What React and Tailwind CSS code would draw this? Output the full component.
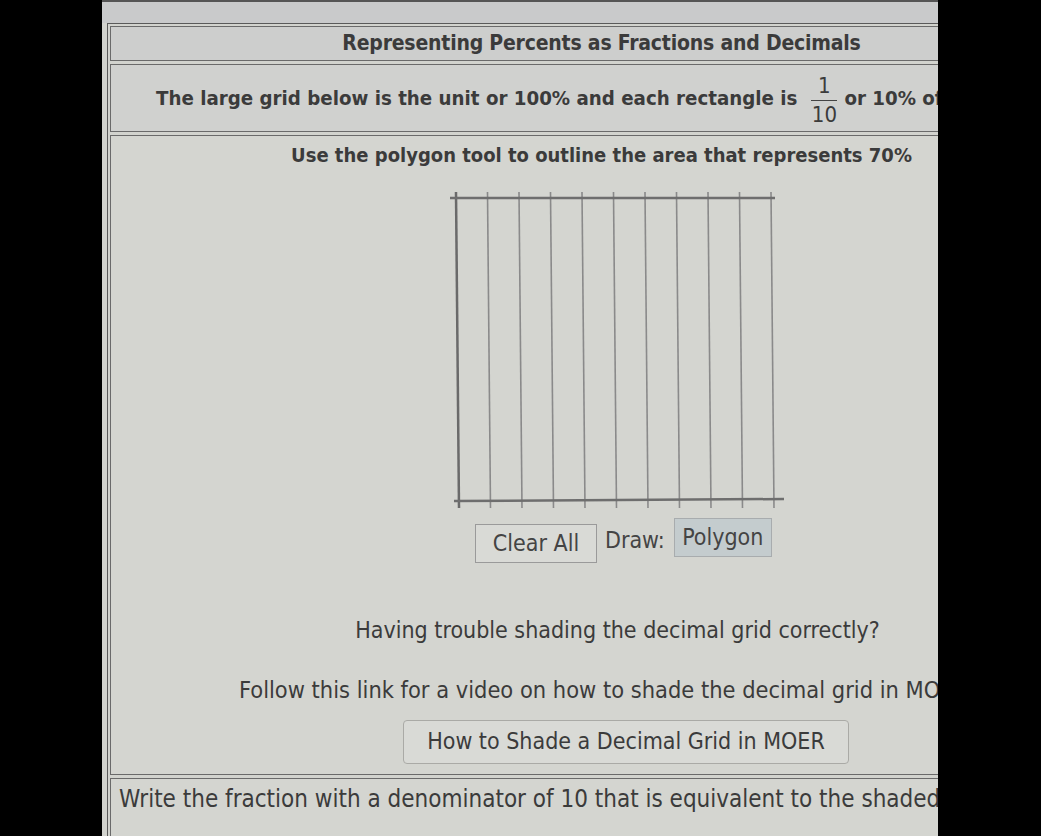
import React from 'react';

const font = { fontFamily: '"DejaVu Sans Condensed", "DejaVu Sans", sans-serif' };

// grid drawn as a picture: 10 equal rectangles
const DecimalGrid = () => {
  const cols = Array.from({ length: 11 }, (_, i) => 8 + i * 31.5);
  return (
    <svg width="336" height="322" viewBox="0 0 336 322">
      {cols.map((x, i) => (
        <line
          key={i}
          x1={x}
          y1="2"
          x2={x + 3}
          y2="318"
          stroke={i === 0 ? '#6a6a6a' : '#8a8a8a'}
          strokeWidth={i === 0 ? 2.5 : 1.6}
        />
      ))}
      <line x1="2" y1="8" x2="327" y2="8" stroke="#6e6e6e" strokeWidth="2.5" />
      <line x1="6" y1="311" x2="336" y2="309" stroke="#6e6e6e" strokeWidth="2.5" />
    </svg>
  );
};

export default function App() {
  return (
    <div className="w-[1041px] h-[836px] bg-black flex overflow-hidden" style={font}>
      <div className="ml-[102px] w-[836px] h-full bg-[#d2d3ce] overflow-hidden flex flex-col">
        <div className="h-[23px] shrink-0 bg-[#c9cacb] border-t-2 border-[#555]"></div>
        <div className="ml-[5px] w-[986px] border-l border-t border-[#5a5a5a] pl-[2px] pt-[2px] flex flex-col gap-[3px] text-[#3b3b3b]">
          {/* title */}
          <div className="h-[35px] border border-[#6a6a6a] bg-[#cdcecd] flex items-center justify-center">
            <span className="text-[21px] font-bold tracking-[-0.2px]">Representing Percents as Fractions and Decimals</span>
          </div>

          {/* unit explanation */}
          <div className="h-[68px] border border-[#6a6a6a] bg-[#d0d1cf] flex items-center pl-[45px] whitespace-nowrap">
            <span className="text-[20.3px] font-bold">The large grid below is the unit or 100% and each rectangle is</span>
            <span className="ml-[14px] mt-[4px] inline-flex flex-col items-center text-[22px] leading-[28px]">
              <span>1</span>
              <span className="w-[26px] border-t border-[#444]"></span>
              <span>10</span>
            </span>
            <span className="ml-[7px] text-[20.3px] font-bold">or 10% of the whole.</span>
          </div>

          {/* drawing panel */}
          <div className="h-[640px] border border-[#6a6a6a] bg-[#d4d5d0] flex flex-col items-center">
            <div className="mt-[4px] text-[20px] font-bold">Use the polygon tool to outline the area that represents 70%</div>
            <div className="mt-[20px] self-start ml-[337px]">
              <DecimalGrid />
            </div>
            <div className="mt-[6px] self-start ml-[364px] flex items-start text-[23px] text-[#444]">
              <button className="mt-[6px] w-[122px] h-[39px] border border-[#9a9a9a] bg-[#d9dad6] flex items-center justify-center">
                Clear All
              </button>
              <span className="ml-[8px] mt-[5px]">Draw:</span>
              <button className="ml-[9px] w-[98px] h-[39px] border border-[#a8acae] bg-[#c4ccce] flex items-center justify-center">
                Polygon
              </button>
            </div>
            <div className="mt-[50px] ml-[32px] text-[23px]">Having trouble shading the decimal grid correctly?</div>
            <div className="mt-[25px] self-start ml-[128px] text-[23.4px] whitespace-nowrap">
              Follow this link for a video on how to shade the decimal grid in MOER.
            </div>
            <button className="mt-[12px] self-start ml-[292px] w-[446px] h-[44px] rounded-[4px] border border-[#aaaaa6] bg-[#d9dad6] text-[23px] flex items-center justify-center">
              How to Shade a Decimal Grid in MOER
            </button>
          </div>

          {/* next question */}
          <div className="h-[60px] border border-[#6a6a6a] bg-[#d4d5d0] pl-[8px] pt-[2px] text-[24px] whitespace-nowrap">
            Write the fraction with a denominator of 10 that is equivalent to the shaded area.
          </div>
        </div>
      </div>
    </div>
  );
}
